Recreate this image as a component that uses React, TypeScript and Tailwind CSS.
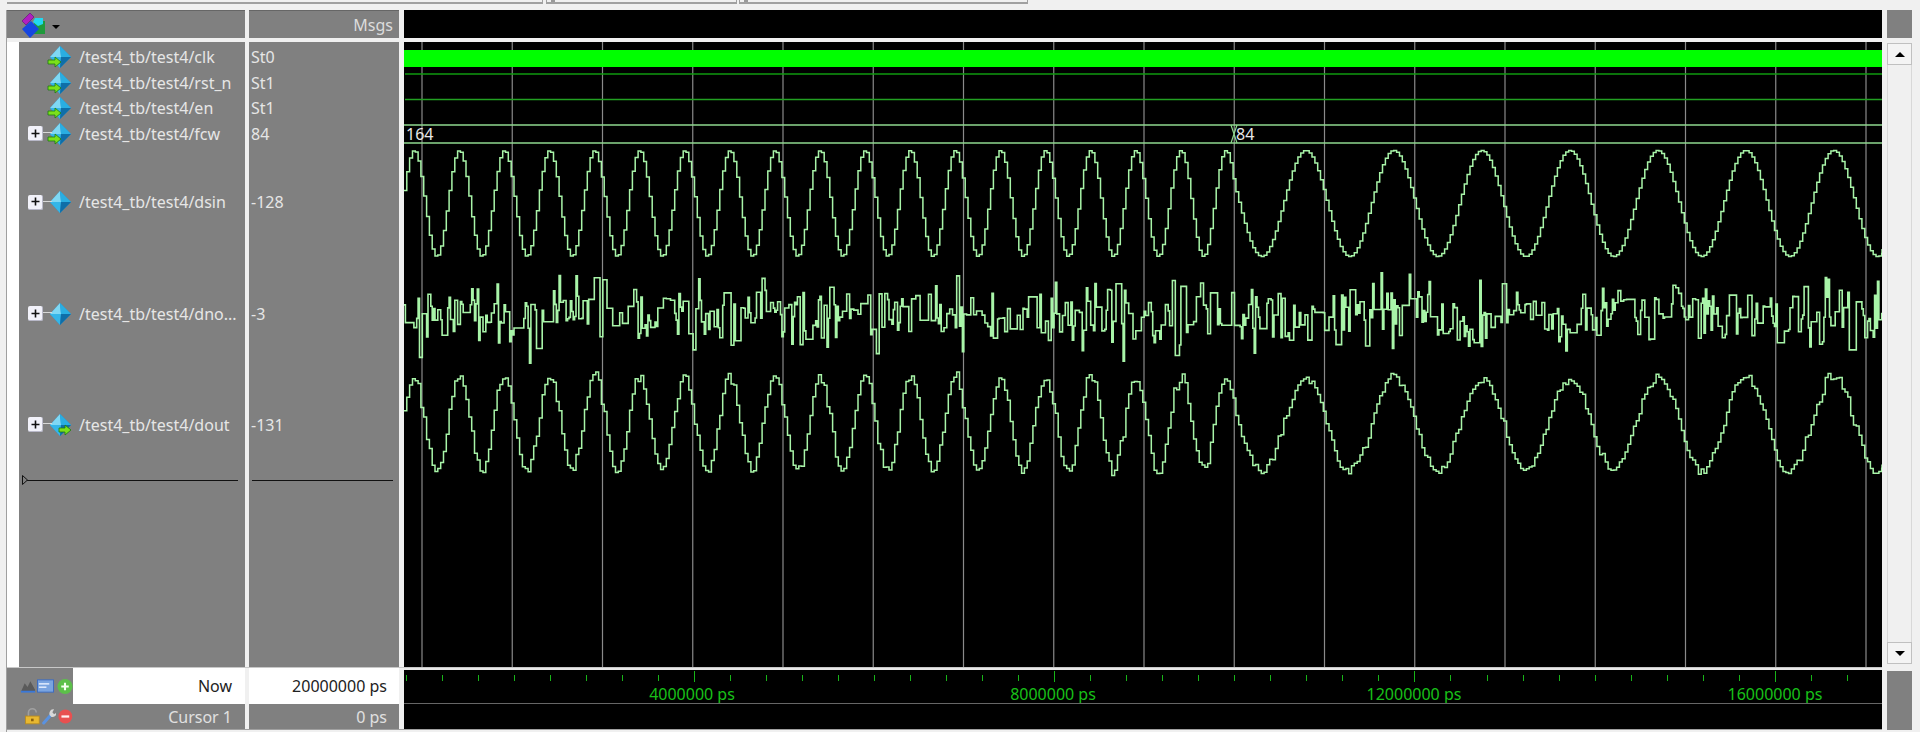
import React from 'react'

const sans = "font-['Tahoma','Noto_Sans','Liberation_Sans',sans-serif]"

// seeded so the noise stays the same between renders
const mulberry = (seed: number) => () => {
  seed |= 0
  seed = (seed + 0x6d2b79f5) | 0
  let t = Math.imul(seed ^ (seed >>> 15), 1 | seed)
  t = (t + Math.imul(t ^ (t >>> 7), 61 | t)) ^ t
  return ((t ^ (t >>> 14)) >>> 0) / 4294967296
}

const WAVE_W = 1478
const STEP = 2.82
const NOISE_STEP = 1.41
const SWITCH = 1234 - 404

const phaseAt = (x: number) => {
  // peak at x=9 with 45px period, then 88px period after the fcw change
  if (x < SWITCH) return ((x - 9.5) / 45.1) * Math.PI * 2
  const p0 = ((SWITCH - 9.5) / 45.1) * Math.PI * 2
  return p0 + ((x - SWITCH) / 88) * Math.PI * 2
}

const rng = mulberry(4127)
const gauss = () => {
  const a = rng() || 0.001
  const b = rng()
  return Math.sqrt(-2 * Math.log(a)) * Math.cos(2 * Math.PI * b)
}

const stair = (ys: number[], step: number) => {
  let d = `M0 ${ys[0].toFixed(1)}`
  ys.forEach((y, i) => {
    const x = Math.min(i * step, WAVE_W)
    d += `V${y.toFixed(1)}H${Math.min(x + step, WAVE_W).toFixed(1)}`
  })
  return d
}

// most samples change right away, some hold and open up the filled look
let held = 0
const noise = Array.from({ length: Math.ceil(WAVE_W / NOISE_STEP) + 1 }, () => {
  if (rng() > 0.45) held = Math.max(-3.2, Math.min(3.2, gauss()))
  return held
})

const samples = Array.from({ length: Math.ceil(WAVE_W / STEP) + 1 }, (_, i) => ({
  s: Math.cos(phaseAt(i * STEP)),
  n: noise[i * 2] ?? 0,
}))

const dsinPath = stair(samples.map((p) => 203.5 - 53 * p.s), STEP)
const dnoisePath = stair(noise.map((n) => 315 - 17 * n), NOISE_STEP)
const doutPath = stair(samples.map((p) => 424 - 47 * p.s - 3 * p.n), STEP)

const grid = Array.from({ length: 17 }, (_, i) => 422 + i * 90.25 - 404)

const ticks = Array.from({ length: 42 }, (_, i) => ({
  x: 1.6 + i * 36.03,
  big: (i + 2) % 10 === 0,
}))

const labels = [
  { x: 288, text: '4000000 ps' },
  { x: 649, text: '8000000 ps' },
  { x: 1010, text: '12000000 ps' },
  { x: 1371, text: '16000000 ps' },
]

const rows = [
  { name: '/test4_tb/test4/clk', value: 'St0', h: 'h-[26px]', icon: 'in', plus: false },
  { name: '/test4_tb/test4/rst_n', value: 'St1', h: 'h-[25px]', icon: 'in', plus: false },
  { name: '/test4_tb/test4/en', value: 'St1', h: 'h-[26px]', icon: 'in', plus: false },
  { name: '/test4_tb/test4/fcw', value: '84', h: 'h-[25px]', icon: 'in', plus: true },
  { name: '/test4_tb/test4/dsin', value: '-128', h: 'h-[112px]', icon: 'plain', plus: true },
  { name: '/test4_tb/test4/dno...', value: '-3', h: 'h-[111px]', icon: 'plain', plus: true },
  { name: '/test4_tb/test4/dout', value: '-131', h: 'h-[111px]', icon: 'out', plus: true },
]

const Diamond = ({ kind }: { kind: string }) => (
  <svg width="25" height="24" viewBox="0 0 25 24" className="shrink-0">
    <path d="M13 1L24 12L13 23L3 12Z" fill="#1b8fd0" />
    <path d="M13 1L3 12L14 12Z" fill="#7fd8f4" />
    <path d="M13 1L24 12H14Z" fill="#2aaee2" />
    <path d="M3 12L13 23L14 12Z" fill="#35b6e8" />
    <path d="M24 12L13 23L14 12Z" fill="#0f6ea8" />
    {kind === 'in' && <path d="M1 15H8V12L14 17L8 22V19H1Z" fill="#7be01a" stroke="#1d7a12" strokeWidth="0.8" />}
    {kind === 'out' && <path d="M12 15H18V12L24 17L18 22V19H12Z" fill="#7be01a" stroke="#1d7a12" strokeWidth="0.8" />}
  </svg>
)

const PlusBox = () => (
  <div className="relative w-[15px] h-[15px] rounded-[2px] bg-[#f2f2fa] border-b border-r border-[#b8b8c8] flex items-center justify-center shrink-0">
    <svg width="9" height="9" viewBox="0 0 9 9">
      <path d="M4.5 0.5V8.5M0.5 4.5H8.5" stroke="#111" strokeWidth="1.6" />
    </svg>
    <div className="absolute left-[15px] top-[6px] w-[9px] h-px bg-[#d8d8d8]" />
  </div>
)

const Logo = () => (
  <svg width="26" height="26" viewBox="0 0 26 26" className="shrink-0">
    <path d="M1 9L9 1L13 5L5 13Z" fill="#b01fc0" stroke="#5c1070" strokeWidth="0.6" />
    <rect x="13" y="9" width="11" height="13" fill="#1f9a3c" />
    <path d="M10 9L18 17L9 26L1 17Z" fill="#1746e0" />
    <path d="M14 6L22 6L22 12L17 14L12 10Z" fill="#22d8f0" />
  </svg>
)

const App = () => {
  return (
    <div className={`w-[1920px] h-[732px] overflow-hidden bg-[#f0f0f0] flex flex-col ${sans} text-[16px]`}>
      {/* tab strip, cut off at the top of the picture */}
      <div className="h-[10px] shrink-0 flex pl-[7px] items-start">
        <div className="w-[536px] h-[4px] border-b-2 border-r border-[#a0a0a0]" />
        <div className="w-[3px]" />
        <div className="w-[191px] h-[4px] border-b-2 border-r border-l border-[#a0a0a0] pl-[4px]">
          <div className="w-[4px] h-[2px] bg-[#999]" />
        </div>
        <div className="w-[2px]" />
        <div className="w-[289px] h-[4px] border-b-2 border-r border-l border-[#a0a0a0] pl-[4px]">
          <div className="w-[4px] h-[2px] bg-[#999]" />
        </div>
      </div>

      <div className="flex-1 flex min-h-0 pl-[6px] pr-[8px]">
        <div className="flex-1 flex flex-col min-w-0 border-l border-[#a0a0a0]">
          {/* header */}
          <div className="h-[28px] shrink-0 flex">
            <div className="w-[238px] bg-[#808080] border-t border-[#666] flex items-center pl-[14px] gap-[5px]">
              <Logo />
              <div className="w-0 h-0 border-x-[4px] border-x-transparent border-t-[4px] border-t-black mt-[4px]" />
            </div>
            <div className="w-[4px] bg-[#f0f0f0]" />
            <div className="w-[150px] bg-[#808080] border-t border-[#666] flex items-center justify-end pr-[6px] text-[#dcdcdc]">Msgs</div>
            <div className="w-[5px] bg-[#f0f0f0]" />
            <div className="w-[1478px] bg-black" />
          </div>
          <div className="h-[4px] shrink-0 bg-[#f0f0f0]" />

          {/* signal list and wave area */}
          <div className="h-[625px] shrink-0 flex">
            <div className="w-[238px] flex">
              <div className="w-[12px] bg-white" />
              <div className="flex-1 bg-[#808080] relative pt-[2px]">
                {rows.map((r) => (
                  <div key={r.name} className={`${r.h} flex items-center text-[#e6e6e6]`}>
                    <div className="w-[9px]" />
                    <div className="w-[15px] h-full flex items-center">{r.plus && <PlusBox />}</div>
                    <div className="w-[31px] pl-[4px] flex items-center"><Diamond kind={r.icon} /></div>
                    <span className="ml-[5px] whitespace-nowrap">{r.name}</span>
                  </div>
                ))}
                <div className="absolute left-[7px] right-[7px] top-[438px] h-[1px] bg-[#111]" />
                <svg width="6" height="10" viewBox="0 0 6 10" className="absolute left-[3px] top-[433px]">
                  <path d="M0.5 0.5L5.5 5L0.5 9.5Z" fill="#808080" stroke="#111" />
                </svg>
              </div>
            </div>
            <div className="w-[4px] bg-[#f0f0f0]" />
            <div className="w-[150px] bg-[#808080] relative pt-[2px] text-[#e6e6e6]">
              {rows.map((r) => (
                <div key={r.name} className={`${r.h} flex items-center pl-[2px]`}>{r.value}</div>
              ))}
              <div className="absolute left-[3px] right-[6px] top-[438px] h-[1px] bg-[#111]" />
            </div>
            <div className="w-[5px] bg-[#f0f0f0]" />
            <div className="w-[1478px] bg-black relative overflow-hidden">
              <svg width="1478" height="625" viewBox="0 42 1478 625" className="block blur-[0.4px]">
                {grid.map((x) => (
                  <line key={x} x1={x} x2={x} y1="42" y2="668" stroke="#8a8a8a" strokeWidth="1.2" />
                ))}
                <rect x="0" y="50" width="1478" height="17" fill="#00ff00" />
                <line x1="1" x2="1478" y1="74" y2="74" stroke="#0f9a0f" strokeWidth="1.4" />
                <line x1="1" x2="1478" y1="99.5" y2="99.5" stroke="#22a022" strokeWidth="1.4" />
                <line x1="0" x2="1478" y1="125" y2="125" stroke="#8fd88f" strokeWidth="1.3" />
                <line x1="0" x2="1478" y1="143" y2="143" stroke="#8fd88f" strokeWidth="1.3" />
                <path d="M827 125L830 134L827 143M833 125L830 134L833 143" stroke="#8fd88f" strokeWidth="1.2" fill="none" />
                <path d={dsinPath} fill="none" stroke="#a8f4a8" strokeWidth="1.5" />
                <path d={dnoisePath} fill="none" stroke="#a8f4a8" strokeWidth="1.6" />
                <path d={doutPath} fill="none" stroke="#a8f4a8" strokeWidth="1.5" />
              </svg>
              <span className="absolute left-[2px] top-[84px] leading-none text-[#e8e8e8]">164</span>
              <span className="absolute left-[832px] top-[84px] leading-none text-[#e8e8e8]">84</span>
            </div>
          </div>

          <div className="h-px shrink-0 bg-[#c8c8c8]" />

          {/* now and cursor rows */}
          <div className="h-[36px] shrink-0 flex">
            <div className="w-[238px] flex">
              <div className="w-[66px] bg-[#808080] flex items-center pl-[13px] gap-px">
                <svg width="17" height="17" viewBox="0 0 17 17">
                  <path d="M1 14L5 5L8 9L11 3L16 12V14Z" fill="#5a5a5a" />
                  <rect x="1" y="13" width="15" height="2" fill="#3a78d8" />
                </svg>
                <svg width="18" height="18" viewBox="0 0 18 18">
                  <rect x="0.5" y="2.5" width="17" height="13" fill="#7aa4e0" stroke="#3a6ac0" />
                  <rect x="2" y="6" width="11" height="1.5" fill="#e8f0ff" />
                  <rect x="2" y="9.5" width="8" height="1.5" fill="#e8f0ff" />
                </svg>
                <svg width="17" height="17" viewBox="0 0 17 17" className="ml-[2px]">
                  <circle cx="8.5" cy="8.5" r="8" fill="#5cc04a" />
                  <path d="M8.5 4.5V12.5M4.5 8.5H12.5" stroke="#f4fff0" strokeWidth="2.2" />
                </svg>
              </div>
              <div className="flex-1 bg-white flex items-center justify-end pr-[13px] text-[#222]">Now</div>
            </div>
            <div className="w-[4px] bg-[#f0f0f0]" />
            <div className="w-[150px] bg-white flex items-center justify-end pr-[12px] text-[#222]">20000000 ps</div>
            <div className="w-[5px] bg-[#f0f0f0]" />
            <div className="w-[1478px] bg-black relative overflow-hidden border-t-2 border-t-[#e8e8e8] border-b border-b-[#666]">
              {ticks.map((t) => (
                <div key={t.x} className={`absolute w-px bg-[#18b418] ${t.big ? 'top-px h-[11px]' : 'top-[5px] h-[6px]'}`} style={{ left: t.x }} />
              ))}
              {labels.map((l) => (
                <span key={l.text} className="absolute top-[15px] -translate-x-1/2 leading-[18px] text-[#18c018] whitespace-nowrap" style={{ left: l.x }}>{l.text}</span>
              ))}
            </div>
          </div>
          <div className="h-[26px] shrink-0 flex border-b border-[#a0a0a0]">
            <div className="w-[238px] bg-[#808080] flex items-center">
              <div className="w-[66px] flex items-center pl-[18px] gap-[2px]">
                <svg width="17" height="19" viewBox="0 0 17 19">
                  <path d="M4 9V5a4.5 4.5 0 0 1 9 0" fill="none" stroke="#a0a0a0" strokeWidth="1.8" />
                  <rect x="0.5" y="9" width="16" height="9" fill="#e8b830" stroke="#b88a20" />
                  <rect x="7" y="12" width="3" height="3" fill="#8a6010" />
                </svg>
                <svg width="17" height="19" viewBox="0 0 17 19">
                  <path d="M2 17L10 8" stroke="#5a92e0" strokeWidth="3.6" strokeLinecap="round" />
                  <path d="M9 8A5 5 0 0 1 14 1L12 4.5L14 7L17 5A5 5 0 0 1 11 10Z" fill="#d8d8d8" />
                </svg>
                <svg width="17" height="17" viewBox="0 0 17 17">
                  <circle cx="8.5" cy="8.5" r="8" fill="#e85050" />
                  <rect x="4" y="7.2" width="9" height="2.6" fill="#fff0f0" />
                </svg>
              </div>
              <div className="flex-1 flex justify-end pr-[13px] text-[#e0e0e0]">Cursor 1</div>
            </div>
            <div className="w-[4px] bg-[#f0f0f0]" />
            <div className="w-[150px] bg-[#808080] flex items-center justify-end pr-[12px] text-[#e0e0e0]">0 ps</div>
            <div className="w-[5px] bg-[#f0f0f0]" />
            <div className="w-[1478px] bg-black" />
          </div>
        </div>

        {/* vertical scrollbar */}
        <div className="w-[30px] shrink-0 flex flex-col pl-[5px] pb-[2px]">
          <div className="h-[28px] bg-[#808080] shrink-0" />
          <div className="h-[5px] shrink-0" />
          <div className="h-[22px] shrink-0 bg-[#f4f4f4] border border-[#c0c0c0] flex items-center justify-center">
            <div className="w-0 h-0 border-x-[5px] border-x-transparent border-b-[5px] border-b-black" />
          </div>
          <div className="flex-1 bg-[#f0f0f0] border-x border-[#d8d8d8]" />
          <div className="h-[22px] shrink-0 bg-[#f4f4f4] border border-[#c0c0c0] flex items-center justify-center">
            <div className="w-0 h-0 border-x-[5px] border-x-transparent border-t-[5px] border-t-black" />
          </div>
          <div className="h-[7px] shrink-0" />
          <div className="h-[59px] bg-[#808080] shrink-0" />
        </div>
      </div>
    </div>
  )
}

export default App
